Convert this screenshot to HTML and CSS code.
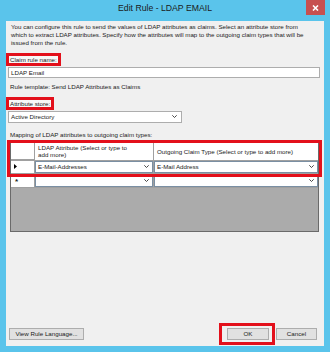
FILE: index.html
```html
<!DOCTYPE html>
<html>
<head>
<meta charset="utf-8">
<link rel="stylesheet" href="styles.css">
</head>
<body>
<div class="window">
  <div class="titlebar">
    <div class="tb-spacer"></div>
    <div class="title">Edit Rule - LDAP EMAIL</div>
    <div class="close"><svg width="7" height="6" viewBox="0 0 7 6"><path d="M1 0.5 L6 5.5 M6 0.5 L1 5.5" stroke="#fff" stroke-width="1.6" fill="none"/></svg></div>
  </div>
  <div class="client">
    <p class="desc">You can configure this rule to send the values of LDAP attributes as claims. Select an attribute store from<br>which to extract LDAP attributes. Specify how the attributes will map to the outgoing claim types that will be<br>issued from the rule.</p>
    <span class="mark label">Claim rule name:</span>
    <div class="textbox">LDAP Email</div>
    <p class="template">Rule template: Send LDAP Attributes as Claims</p>
    <span class="mark label mark2">Attribute store:</span>
    <div class="select"><span>Active Directory</span><svg class="chev" width="5" height="3" viewBox="0 0 5 3"><path d="M0.3 0.3 L2.5 2.5 L4.7 0.3" stroke="#333" stroke-width="0.9" fill="none"/></svg></div>
    <p class="maplabel">Mapping of LDAP attributes to outgoing claim types:</p>
    <div class="grid-wrap">
      <div class="grid">
        <div class="row head">
          <div class="rh"></div>
          <div class="hc">LDAP Attribute (Select or type to<br>add more)</div>
          <div class="hc">Outgoing Claim Type (Select or type to add more)</div>
        </div>
        <div class="row data">
          <div class="rh"><svg width="3" height="5" viewBox="0 0 3 5"><path d="M0 0 L3 2.5 L0 5 Z" fill="#000"/></svg></div>
          <div class="cell"><div class="combo"><span>E-Mail-Addresses</span><svg class="chev" width="5" height="3" viewBox="0 0 5 3"><path d="M0.3 0.3 L2.5 2.5 L4.7 0.3" stroke="#333" stroke-width="0.9" fill="none"/></svg></div></div>
          <div class="cell"><div class="combo"><span>E-Mail Address</span><svg class="chev" width="5" height="3" viewBox="0 0 5 3"><path d="M0.3 0.3 L2.5 2.5 L4.7 0.3" stroke="#333" stroke-width="0.9" fill="none"/></svg></div></div>
        </div>
        <div class="row data">
          <div class="rh star">*</div>
          <div class="cell"><div class="combo"><span></span><svg class="chev" width="5" height="3" viewBox="0 0 5 3"><path d="M0.3 0.3 L2.5 2.5 L4.7 0.3" stroke="#333" stroke-width="0.9" fill="none"/></svg></div></div>
          <div class="cell"><div class="combo"><span></span><svg class="chev" width="5" height="3" viewBox="0 0 5 3"><path d="M0.3 0.3 L2.5 2.5 L4.7 0.3" stroke="#333" stroke-width="0.9" fill="none"/></svg></div></div>
        </div>
      </div>
      <div class="grid-mark"></div>
    </div>
    <div class="spacer"></div>
    <div class="buttons">
      <button class="btn btn-view">View Rule Language...</button>
      <div class="right">
        <span class="mark-ok"><button class="btn btn-ok">OK</button></span>
        <button class="btn btn-cancel">Cancel</button>
      </div>
    </div>
  </div>
</div>
</body>
</html>
```

FILE: styles.css
```css
* { box-sizing: border-box; }
html, body { margin: 0; padding: 0; }
body {
  font-family: "Liberation Sans", Arial, sans-serif;
  color: #000;
  background: #5ac4eb;
}
.window {
  width: 330px;
  height: 352px;
  background: #5ac4eb;
  display: flex;
  flex-direction: column;
  padding: 0 6px 6px 6px;
}
.titlebar {
  height: 21px;
  flex: none;
  display: grid;
  grid-template-columns: 1fr auto 1fr;
  align-items: start;
}
.title {
  font-size: 8.7px;
  line-height: 10px;
  padding-top: 3px;
  color: #1a1a1a;
}
.close {
  justify-self: end;
  width: 19px;
  height: 15px;
  margin-right: -1px;
  background: #c75050;
  display: flex;
  align-items: center;
  justify-content: center;
}
.client {
  flex: 1;
  background: #f0f0f0;
  display: flex;
  flex-direction: column;
  align-items: flex-start;
  padding: 0 2px;
  font-size: 6.2px;
  color: #1a1a1a;
}
.desc {
  margin: 1.5px 0 0 3px;
  line-height: 8.3px;
  white-space: nowrap;
}
.mark {
  display: inline-block;
  border: 3px solid #e3101b;
  padding: 0 1px;
  line-height: 7px;
  margin: 5.5px 0 0 -2px;
  background: #f7f7f7;
}
.mark2 { margin-top: 6px; }
.textbox {
  margin-top: 1px;
  height: 11px;
  width: 312px;
  background: #fff;
  border: 1px solid #adadad;
  padding-left: 2px;
  line-height: 9px;
}
.template {
  margin: 5px 0 0 2px;
  line-height: 8px;
}
.select {
  margin-top: 1px;
  height: 12px;
  width: 174px;
  background: #fff;
  border: 1px solid #adadad;
  padding: 0 4px 0 2px;
  display: flex;
  align-items: center;
  justify-content: space-between;
}
.maplabel {
  margin: 8px 0 0 2px;
  line-height: 8px;
}
.grid-wrap {
  position: relative;
  margin: 3px 0 0 2px;
  width: 309px;
}
.grid {
  height: 90px;
  background: #ababab;
  border: 1px solid #6a6a6a;
}
.row {
  display: grid;
  grid-template-columns: 23px 119px 1fr;
}
.row.head {
  height: 18px;
  background: #fff;
  border-bottom: 1px solid #a0a0a0;
}
.hc {
  border-left: 1px solid #a0a0a0;
  padding-left: 3px;
  line-height: 7px;
  display: flex;
  align-items: center;
}
.row.data { height: 13px; }
.row.data + .row.data { margin-top: 1px; }
.rh {
  background: #fff;
  border-bottom: 1px solid #a0a0a0;
  display: flex;
  align-items: center;
  padding-left: 3px;
}
.rh.star { font-size: 8px; font-weight: bold; padding-left: 4px; line-height: 8px; padding-top: 2px; }
.cell {
  background: #fff;
  border-left: 1px solid #a0a0a0;
  border-bottom: 1px solid #a0a0a0;
}
.combo {
  height: 100%;
  border: 1px solid #7a8fa3;
  display: flex;
  align-items: center;
  justify-content: space-between;
  padding: 0 3px 0 2px;
  line-height: 8px;
}
.chev { flex: none; }
.grid-mark {
  position: absolute;
  left: -3px;
  top: -2px;
  width: 315px;
  height: 37px;
  border: 3px solid #e3101b;
}
.spacer { flex: 1; }
.buttons {
  align-self: stretch;
  display: flex;
  align-items: center;
  justify-content: space-between;
  height: 22px;
  margin-bottom: 1px;
  padding-right: 5px;
}
.right {
  display: flex;
  align-items: center;
}
.btn {
  font-family: "Liberation Sans", Arial, sans-serif;
  font-size: 6.2px;
  height: 12px;
  background: #e1e1e1;
  border: 1px solid #adadad;
  padding: 0;
  margin: 0;
  color: #1a1a1a;
  line-height: 10px;
}
.btn-view { width: 75px; margin-left: 1px; }
.mark-ok {
  display: flex;
  border: 3px solid #e3101b;
  padding: 2px 3px 2px 5px;
}
.btn-ok { width: 42px; }
.btn-cancel { width: 41px; margin-left: 1px; }
```
